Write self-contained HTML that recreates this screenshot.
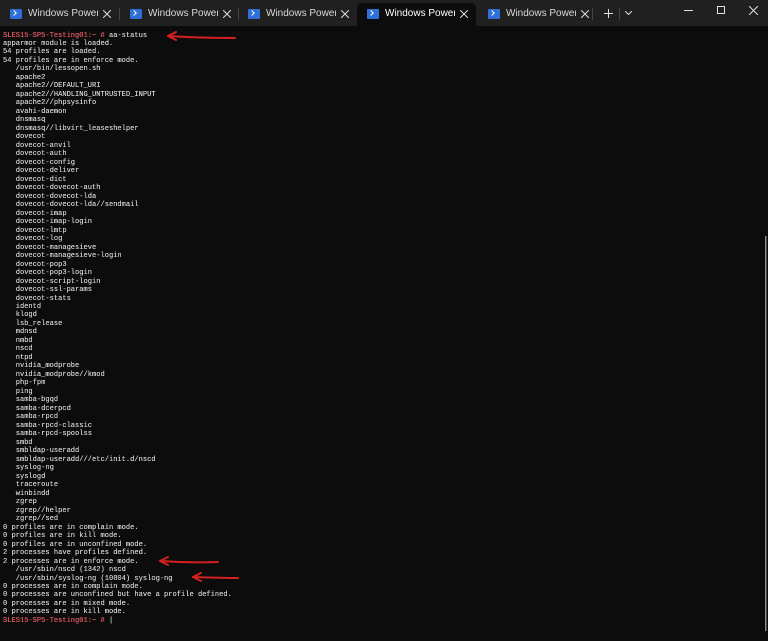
<!DOCTYPE html>
<html><head><meta charset="utf-8"><style>
*{margin:0;padding:0;box-sizing:border-box}
body{width:768px;height:641px;background:#0c0c0c;overflow:hidden;position:relative;font-family:"Liberation Sans",sans-serif}
.bar{position:absolute;left:0;top:0;width:768px;height:26px;background:#202020}
.tab{position:absolute;top:3px;height:23px;width:116px;color:#d8d8d8;font-size:10px}
.tab.act{background:#0c0c0c;border-radius:5px 5px 0 0;color:#fff}
.tab .ic{position:absolute;left:10px;top:6px;width:12px;height:10px;background:#2f6fd8;border-radius:1px}
.tab .ic:after{content:"";position:absolute;left:2px;top:2px;width:3px;height:3px;border-right:1.3px solid #fff;border-bottom:1.3px solid #fff;transform:rotate(-45deg)}
.tab .t{position:absolute;left:28px;top:5px;width:70px;overflow:hidden;white-space:nowrap}
.tab svg{position:absolute;left:103px;top:7px}
.sep{position:absolute;top:8px;width:1px;height:12px;background:#444}
.term{position:absolute;left:3px;top:31.5px;font-family:"Liberation Mono",monospace;font-size:7.07px;line-height:8.48px;color:#d4d4d4;white-space:pre;text-shadow:0 0 0.3px #d4d4d4}
.r{color:#e8424c}
</style></head><body>
<div class="bar">
<div class="tab" style="left:0"><div class="ic"></div><div class="t">Windows PowerS</div><svg width="8" height="8"><path d="M0 0L8 8M8 0L0 8" stroke="#ddd" stroke-width="1"/></svg></div>
<div class="sep" style="left:119px"></div>
<div class="tab" style="left:120px"><div class="ic"></div><div class="t">Windows PowerS</div><svg width="8" height="8"><path d="M0 0L8 8M8 0L0 8" stroke="#ddd" stroke-width="1"/></svg></div>
<div class="sep" style="left:238px"></div>
<div class="tab" style="left:238px"><div class="ic"></div><div class="t">Windows PowerS</div><svg width="8" height="8"><path d="M0 0L8 8M8 0L0 8" stroke="#ddd" stroke-width="1"/></svg></div>
<div class="tab act" style="left:357px;width:119px"><div class="ic"></div><div class="t">Windows PowerS</div><svg width="8" height="8"><path d="M0 0L8 8M8 0L0 8" stroke="#ddd" stroke-width="1"/></svg></div>
<div class="tab" style="left:478px"><div class="ic"></div><div class="t">Windows PowerS</div><svg width="8" height="8"><path d="M0 0L8 8M8 0L0 8" stroke="#ddd" stroke-width="1"/></svg></div>
<div class="sep" style="left:592px"></div>
<svg style="position:absolute;left:604px;top:9px" width="9" height="9"><path d="M4.5 0V9M0 4.5H9" stroke="#ddd"/></svg>
<div class="sep" style="left:619px"></div>
<svg style="position:absolute;left:625px;top:11px" width="7" height="4"><path d="M0 0L3.5 3.5L7 0" stroke="#ddd" fill="none"/></svg>
<div style="position:absolute;left:684px;top:10px;width:9px;height:1px;background:#ddd"></div>
<div style="position:absolute;left:717px;top:6px;width:8px;height:8px;border:1px solid #ddd"></div>
<svg style="position:absolute;left:749px;top:6px" width="9" height="9"><path d="M0 0L9 9M9 0L0 9" stroke="#ddd"/></svg>
</div>
<div class="term"><span class="r">SLES15-SP5-Testing01:~ #</span> aa-status
apparmor module is loaded.
54 profiles are loaded.
54 profiles are in enforce mode.
   /usr/bin/lessopen.sh
   apache2
   apache2//DEFAULT_URI
   apache2//HANDLING_UNTRUSTED_INPUT
   apache2//phpsysinfo
   avahi-daemon
   dnsmasq
   dnsmasq//libvirt_leaseshelper
   dovecot
   dovecot-anvil
   dovecot-auth
   dovecot-config
   dovecot-deliver
   dovecot-dict
   dovecot-dovecot-auth
   dovecot-dovecot-lda
   dovecot-dovecot-lda//sendmail
   dovecot-imap
   dovecot-imap-login
   dovecot-lmtp
   dovecot-log
   dovecot-managesieve
   dovecot-managesieve-login
   dovecot-pop3
   dovecot-pop3-login
   dovecot-script-login
   dovecot-ssl-params
   dovecot-stats
   identd
   klogd
   lsb_release
   mdnsd
   nmbd
   nscd
   ntpd
   nvidia_modprobe
   nvidia_modprobe//kmod
   php-fpm
   ping
   samba-bgqd
   samba-dcerpcd
   samba-rpcd
   samba-rpcd-classic
   samba-rpcd-spoolss
   smbd
   smbldap-useradd
   smbldap-useradd///etc/init.d/nscd
   syslog-ng
   syslogd
   traceroute
   winbindd
   zgrep
   zgrep//helper
   zgrep//sed
0 profiles are in complain mode.
0 profiles are in kill mode.
0 profiles are in unconfined mode.
2 processes have profiles defined.
2 processes are in enforce mode.
   /usr/sbin/nscd (1342) nscd
   /usr/sbin/syslog-ng (10804) syslog-ng
0 processes are in complain mode.
0 processes are unconfined but have a profile defined.
0 processes are in mixed mode.
0 processes are in kill mode.
<span class="r">SLES15-SP5-Testing01:~ #</span> |</div>
<svg style="position:absolute;left:0;top:0" width="768" height="641">
<g stroke="#d42020" stroke-width="2" fill="none" stroke-linecap="round">
<path d="M168 36 Q200 38 235 38"/><path d="M168 36 L176 32 M168 36 L176 40"/>
<path d="M160 561 Q190 563 218 562"/><path d="M160 561 L168 557 M160 561 L168 565"/>
<path d="M193 577 Q225 578 238 578"/><path d="M193 577 L201 573 M193 577 L201 581"/>
</g>
<rect x="765" y="236" width="1.5" height="395" fill="#8a8a8a"/>
</svg>
</body></html>
